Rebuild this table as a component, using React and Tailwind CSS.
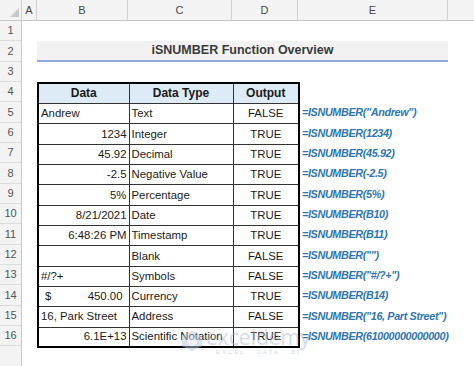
import React from "react";

const rows = [
  { b: "Andrew", bAlign: "left", c: "Text", d: "FALSE", e: '=ISNUMBER("Andrew")' },
  { b: "1234", bAlign: "right", c: "Integer", d: "TRUE", e: "=ISNUMBER(1234)" },
  { b: "45.92", bAlign: "right", c: "Decimal", d: "TRUE", e: "=ISNUMBER(45.92)" },
  { b: "-2.5", bAlign: "right", c: "Negative Value", d: "TRUE", e: "=ISNUMBER(-2.5)" },
  { b: "5%", bAlign: "right", c: "Percentage", d: "TRUE", e: "=ISNUMBER(5%)" },
  { b: "8/21/2021", bAlign: "right", c: "Date", d: "TRUE", e: "=ISNUMBER(B10)" },
  { b: "6:48:26 PM", bAlign: "right", c: "Timestamp", d: "TRUE", e: "=ISNUMBER(B11)" },
  { b: "", bAlign: "left", c: "Blank", d: "FALSE", e: '=ISNUMBER("")' },
  { b: "#/?+", bAlign: "left", c: "Symbols", d: "FALSE", e: '=ISNUMBER("#/?+")' },
  { b: "$", bAlign: "currency", c: "Currency", d: "TRUE", e: "=ISNUMBER(B14)" },
  { b: "16, Park Street", bAlign: "left", c: "Address", d: "FALSE", e: '=ISNUMBER("16, Part Street")' },
  { b: "6.1E+13", bAlign: "right", c: "Scientific Notation", d: "TRUE", e: "=ISNUMBER(61000000000000)" },
];

const font = { fontFamily: '"Liberation Sans", Arial, sans-serif' };

function ColHeader({ w, label, last }) {
  return (
    <div
      className={`${w} h-full flex items-center justify-center border-r border-[#d0d0d0] text-[11px] text-[#4a4a4a] ${last ? "flex-1 border-r-0" : ""}`}
    >
      {label}
    </div>
  );
}

export default function App() {
  const rowNums = Array.from({ length: 16 }, (_, i) => i + 1);
  return (
    <div className="w-[474px] h-[366px] overflow-hidden bg-white relative" style={font}>
      {/* column header */}
      <div className="flex h-[21px] bg-[#f3f3f3] border-b border-[#c8c8c8]">
        <div className="w-[22px] h-full border-r border-[#d0d0d0] relative">
          <svg className="absolute right-[2px] bottom-[3px]" width="9" height="9" viewBox="0 0 9 9">
            <polygon points="9,0 9,9 0,9" fill="#c9c9c9" />
          </svg>
        </div>
        <ColHeader w="w-[15px]" label="A" />
        <ColHeader w="w-[91px]" label="B" />
        <ColHeader w="w-[104px]" label="C" />
        <ColHeader w="w-[66px]" label="D" />
        <ColHeader w="w-[150px]" label="E" />
        <ColHeader w="" label="" last />
      </div>

      <div className="flex">
        {/* row headers */}
        <div className="w-[22px] flex flex-col bg-[#f3f3f3] border-r border-[#c8c8c8] h-[345px]">
          {rowNums.map((n) => (
            <div
              key={n}
              className="h-[20.34px] shrink-0 flex items-center justify-center text-[11px] text-[#555] border-b border-[#dcdcdc]"
            >
              {n}
            </div>
          ))}
        </div>

        {/* sheet */}
        <div className="flex-1 flex flex-col">
          <div className="h-[20.34px]" />
          <div className="h-[20.34px] pl-[15px] flex">
            <div className="w-[411px] h-full bg-[#f2f2f2] border-b-2 border-[#8eaadb] flex items-center justify-center text-[12.5px] font-bold text-[#3a3a3a]">
              iSNUMBER Function Overview
            </div>
          </div>
          <div className="h-[20.34px]" />
          <div className="flex pl-[15px]">
            <table className="table-fixed border-collapse border-2 border-black text-[11.4px] text-[#1a1a1a]">
              <colgroup>
                <col className="w-[91px]" />
                <col className="w-[104px]" />
                <col className="w-[66px]" />
              </colgroup>
              <thead>
                <tr className="h-[20.34px] bg-[#ddebf7]">
                  <th className="border border-[#333] font-bold text-[12px] text-center align-bottom pb-[1px]">Data</th>
                  <th className="border border-[#333] font-bold text-[12px] text-center align-bottom pb-[1px]">Data Type</th>
                  <th className="border border-[#333] font-bold text-[12px] text-center align-bottom pb-[1px]">Output</th>
                </tr>
              </thead>
              <tbody>
                {rows.map((r, i) => (
                  <tr key={i} className="h-[20.34px]">
                    <td className="border border-[#333] px-[2px] align-bottom pb-[1px] whitespace-nowrap">
                      {r.bAlign === "currency" ? (
                        <div className="flex justify-between pl-[4px] pr-[4px]">
                          <span>$</span>
                          <span>450.00</span>
                        </div>
                      ) : (
                        <div className={r.bAlign === "right" ? "text-right" : "text-left"}>{r.b}</div>
                      )}
                    </td>
                    <td className="border border-[#333] px-[2px] align-bottom pb-[1px] whitespace-nowrap">{r.c}</td>
                    <td className="border border-[#333] px-[2px] align-bottom pb-[1px] text-center">{r.d}</td>
                  </tr>
                ))}
              </tbody>
            </table>
            <div className="flex flex-col">
              <div className="h-[20.34px]" />
              {rows.map((r, i) => (
                <div
                  key={i}
                  className="h-[20.34px] flex items-end pb-[2px] pl-[2px] text-[10.8px] tracking-[-0.35px] font-bold italic text-[#2e75b6] whitespace-nowrap"
                >
                  {r.e}
                </div>
              ))}
            </div>
          </div>
        </div>
      </div>

      {/* watermark */}
      <div className="absolute left-[180px] top-[327px] flex items-center gap-[2px] opacity-50 pointer-events-none">
        <svg width="24" height="22" viewBox="0 0 24 22">
          <path d="M12 1 L22 6 L22 16 L12 21 L2 16 L2 6 Z" fill="#b9c3db" />
          <path d="M12 6 L17 9 L17 14 L12 17 L7 14 L7 9 Z" fill="#dfe4ef" />
        </svg>
        <div className="flex flex-col items-center leading-none">
          <span className="text-[21px] text-[#a9b6d3]" style={{ fontFamily: '"Open Sans", sans-serif' }}>exceldemy</span>
          <span className="text-[6px] tracking-[2px] text-[#a9b6d3] mt-[1px]">EXCEL · DATA · BI</span>
        </div>
      </div>
    </div>
  );
}
